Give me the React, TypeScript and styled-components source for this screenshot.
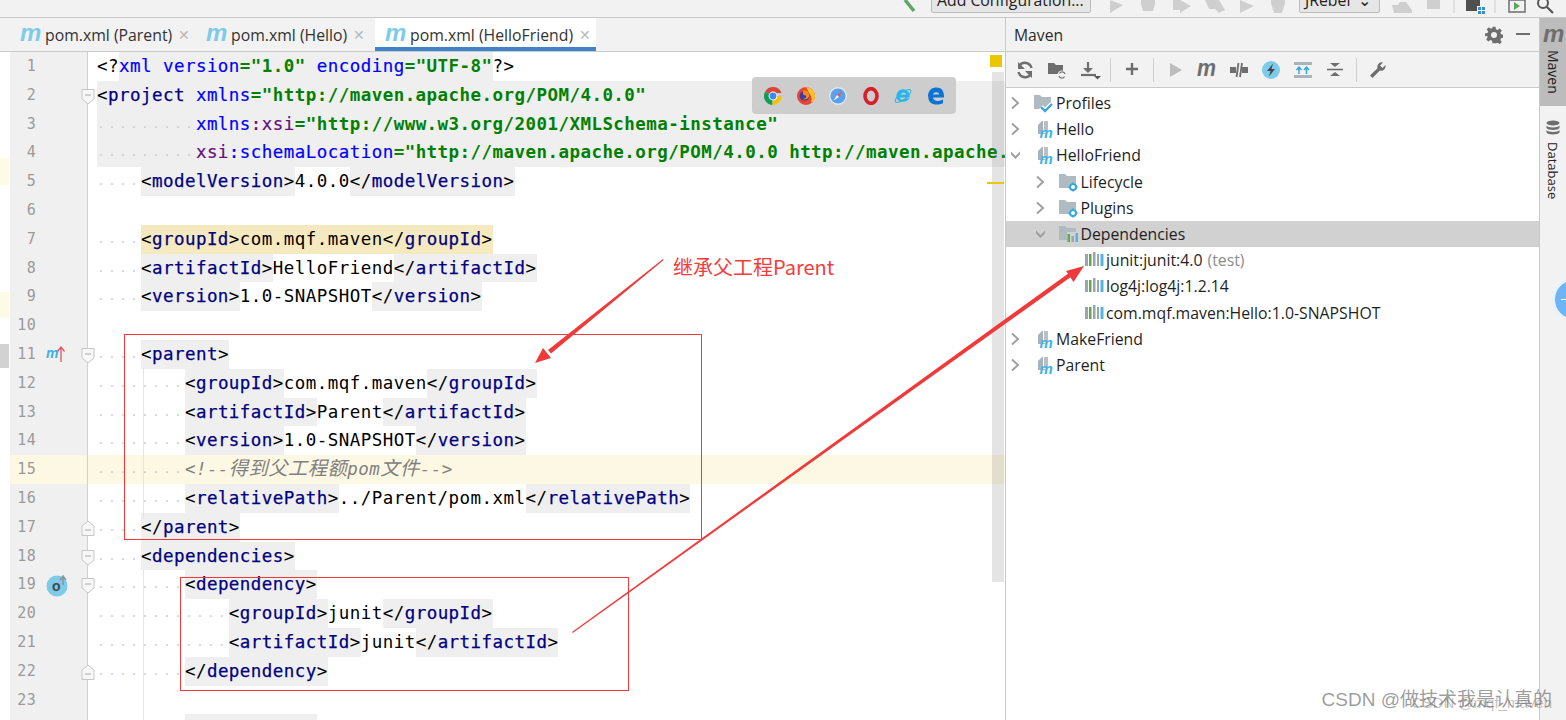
import { ReactNode } from "react"
import styled, { createGlobalStyle } from "styled-components"

const LINE_HEIGHT = 28.8

type Kind = "dot" | "punct" | "tag" | "attr" | "ns" | "value" | "text" | "comment" | "cjk"
type Token = [Kind, string, boolean?]

const dots = (n: number): Token => ["dot", ".".repeat(n)]
const open = (name: string): Token[] => [["punct", "<", true], ["tag", name, true], ["punct", ">", true]]
const close = (name: string): Token[] => [["punct", "</", true], ["tag", name, true], ["punct", ">", true]]

const CODE: Token[][] = [
  [["punct", "<?"], ["attr", "xml", true], ["attr", " version", true], ["value", '="1.0"', true], ["attr", " encoding", true], ["value", '="UTF-8"', true], ["punct", "?>"]],
  [["punct", "<", true], ["tag", "project", true], ["attr", " xmlns", true], ["value", '="http://maven.apache.org/POM/4.0.0"', true]],
  [dots(9), ["attr", "xmlns", true], ["ns", ":xsi", true], ["value", '="http://www.w3.org/2001/XMLSchema-instance"', true]],
  [dots(9), ["ns", "xsi", true], ["attr", ":schemaLocation", true], ["value", '="http://maven.apache.org/POM/4.0.0 http://maven.apache.', true]],
  [dots(4), ...open("modelVersion"), ["text", "4.0.0"], ...close("modelVersion")],
  [],
  [dots(4), ...open("groupId"), ["text", "com.mqf.maven", true], ...close("groupId")],
  [dots(4), ...open("artifactId"), ["text", "HelloFriend"], ...close("artifactId")],
  [dots(4), ...open("version"), ["text", "1.0-SNAPSHOT"], ...close("version")],
  [],
  [dots(4), ...open("parent")],
  [dots(8), ...open("groupId"), ["text", "com.mqf.maven"], ...close("groupId")],
  [dots(8), ...open("artifactId"), ["text", "Parent"], ...close("artifactId")],
  [dots(8), ...open("version"), ["text", "1.0-SNAPSHOT"], ...close("version")],
  [dots(8), ["comment", "<!--"], ["cjk", "得到父工程额"], ["comment", "pom"], ["cjk", "文件"], ["comment", "-->"]],
  [dots(8), ...open("relativePath"), ["text", "../Parent/pom.xml"], ...close("relativePath")],
  [dots(4), ...close("parent")],
  [dots(4), ...open("dependencies")],
  [dots(8), ...open("dependency")],
  [dots(12), ...open("groupId"), ["text", "junit"], ...close("groupId")],
  [dots(12), ...open("artifactId"), ["text", "junit"], ...close("artifactId")],
  [dots(8), ...close("dependency")],
  [],
  [dots(8), ["punct", " ".repeat(12), true]],
]

const GlobalStyle = createGlobalStyle`
  html, body { margin: 0; padding: 0; background: #fff; overflow: hidden; }
  body { font-family: "Open Sans", "Noto Sans", "Noto Sans CJK SC", sans-serif; }
`

const Page = styled.div`
  position: relative;
  width: 1566px;
  height: 720px;
  overflow: hidden;
  display: flex;
  flex-direction: column;
`
const TopBar = styled.div`
  height: 17px;
  flex: none;
  background: #f2f2f2;
  border-bottom: 1px solid #c9c9c9;
  display: flex;
  align-items: flex-end;
  padding-left: 900px;
  overflow: hidden;
`
const ToolButton = styled.div<{ $w: number }>`
  width: ${(p) => p.$w}px;
  height: 22px;
  margin-bottom: 4px;
  flex: none;
  box-sizing: border-box;
  background: #e6e6e6;
  border: 1px solid #bdbdbd;
  border-radius: 2px;
  font-size: 15.8px;
  line-height: 17px;
  padding-left: 5px;
  color: #222;
  white-space: nowrap;
  overflow: hidden;
  display: flex;
  justify-content: space-between;
  padding-right: 8px;
`
const TopIcon = styled.svg`
  flex: none;
`
const HammerIcon = styled(TopIcon)`
  margin-right: 15px;
`
const Body = styled.div`
  flex: 1;
  display: flex;
  min-height: 0;
`
const EditorColumn = styled.div`
  width: 1005px;
  flex: none;
  display: flex;
  flex-direction: column;
  border-right: 1px solid #c9c9c9;
`
const TabBar = styled.div`
  height: 33px;
  flex: none;
  display: flex;
  background: #f2f2f2;
  border-bottom: 1px solid #c9c9c9;
  padding-left: 10px;
`
const Tab = styled.div<{ $active?: boolean; $w: number }>`
  width: ${(p) => p.$w}px;
  flex: none;
  box-sizing: border-box;
  display: flex;
  align-items: center;
  gap: 5px;
  padding-left: 10px;
  font-size: 15.8px;
  color: #333;
  white-space: nowrap;
  background: ${(p) => (p.$active ? "#fff" : "transparent")};
  box-shadow: ${(p) => (p.$active ? "inset 0 -4px 0 #4083c9" : "none")};
`
const MavenM = styled.span`
  font-family: "Liberation Sans", sans-serif;
  font-style: italic;
  font-weight: 700;
  font-size: 24px;
  line-height: 20px;
  width: 20px;
  color: #7ecbe9;
  margin-top: -4px;
`
const CloseMark = styled.span`
  color: #b8b8b8;
  font-size: 14px;
  margin-left: 1px;
`
const EditorBody = styled.div`
  flex: 1;
  display: flex;
  min-height: 0;
  position: relative;
  overflow: hidden;
`
const LeftStrip = styled.div`
  width: 10px;
  flex: none;
  background: #fff;
  position: relative;
`
const StripMark = styled.div<{ $top: number; $h: number; $c: string }>`
  position: absolute;
  left: 0;
  width: 9px;
  top: ${(p) => p.$top}px;
  height: ${(p) => p.$h}px;
  background: ${(p) => p.$c};
`
const Gutter = styled.div`
  width: 77px;
  flex: none;
  background: #f0f0f0;
  border-right: 1px solid #d0d0d0;
  position: relative;
  z-index: 1;
`
const LineNo = styled.div<{ $current?: boolean }>`
  height: ${LINE_HEIGHT}px;
  line-height: ${LINE_HEIGHT}px;
  font-family: "DejaVu Sans Mono", monospace;
  font-size: 15px;
  letter-spacing: 0.3px;
  color: #9a9a9a;
  text-align: right;
  padding-right: 51px;
  background: ${(p) => (p.$current ? "#fdf8e3" : "transparent")};
`
const FoldMark = styled.svg<{ $line: number }>`
  position: absolute;
  left: 71px;
  top: ${(p) => p.$line * LINE_HEIGHT + 7}px;
`
const GutterIcon = styled.svg<{ $line: number }>`
  position: absolute;
  left: 36px;
  top: ${(p) => p.$line * LINE_HEIGHT + 3}px;
`
const Code = styled.div`
  flex: 1;
  position: relative;
  background: #fff;
  min-width: 0;
`
const CodeLine = styled.div<{ $bg?: string; $band?: boolean }>`
  height: ${LINE_HEIGHT}px;
  line-height: ${LINE_HEIGHT}px;
  box-sizing: border-box;
  padding-left: 9px;
  white-space: pre;
  font-family: "DejaVu Sans Mono", "Noto Sans CJK SC", monospace;
  font-size: 17.5px;
  letter-spacing: 0.45px;
  background: ${(p) => p.$bg ?? "transparent"};
  background-clip: ${(p) => (p.$band ? "content-box" : "border-box")};
`
const TOKEN_STYLE: Record<Kind, string> = {
  dot: "color: #cfcfcf; font-size: 13px; letter-spacing: 3.16px;",
  punct: "color: #000;",
  tag: "color: #000080; -webkit-text-stroke: 0.25px #000080;",
  attr: "color: #0000ff; -webkit-text-stroke: 0.2px #0000ff;",
  ns: "color: #660e7a; -webkit-text-stroke: 0.2px #660e7a;",
  value: "color: #008000; font-weight: 600;",
  text: "color: #000;",
  comment: "color: #808080; font-style: italic;",
  cjk: "color: #808080; font-style: italic; font-size: 19.3px;",
}
const Tok = styled.span<{ $kind: Kind; $hl?: string }>`
  display: inline-block;
  height: ${LINE_HEIGHT}px;
  vertical-align: top;
  background: ${(p) => p.$hl ?? "transparent"};
  ${(p) => TOKEN_STYLE[p.$kind]}
`
const IndentGuide = styled.div<{ $top: number; $h: number }>`
  position: absolute;
  left: 55px;
  top: ${(p) => p.$top}px;
  height: ${(p) => p.$h}px;
  width: 1px;
  background: #e4e4e4;
`
const BrowserBar = styled.div`
  position: absolute;
  left: 664px;
  top: 25px;
  width: 204px;
  height: 37px;
  background: #cdcdcd;
  border-radius: 4px;
  display: flex;
  align-items: center;
  padding-left: 12px;
  box-sizing: border-box;
  gap: 14.6px;
`
const ScrollThumb = styled.div`
  position: absolute;
  left: 904px;
  top: 20px;
  width: 12px;
  height: 510px;
  background: rgba(120, 120, 120, 0.2);
`
const ErrorStripe = styled.div<{ $x: number; $y: number; $w: number; $h: number }>`
  position: absolute;
  left: ${(p) => p.$x}px;
  top: ${(p) => p.$y}px;
  width: ${(p) => p.$w}px;
  height: ${(p) => p.$h}px;
  background: #ebc700;
`
const MavenPanel = styled.div`
  flex: 1;
  display: flex;
  flex-direction: column;
  background: #fff;
  min-width: 0;
`
const PanelHeader = styled.div`
  height: 33px;
  flex: none;
  background: #f2f2f2;
  border-bottom: 1px solid #c9c9c9;
  display: flex;
  align-items: center;
  gap: 12px;
  padding: 0 8px;
  font-size: 15.7px;
  color: #2b2b2b;
`
const PanelTitle = styled.span`
  flex: 1;
`
const PanelToolbar = styled.div`
  height: 35px;
  flex: none;
  background: #f2f2f2;
  border-bottom: 1px solid #c9c9c9;
  display: flex;
  align-items: center;
  padding-left: 3px;
`
const ToolCell = styled.div`
  width: 32px;
  flex: none;
  display: flex;
  justify-content: center;
  align-items: center;
`
const ToolSep = styled.div`
  width: 1px;
  height: 24px;
  margin: 0 5px;
  flex: none;
  background: #cfcfcf;
`
const Tree = styled.div`
  padding-top: 2px;
`
const TreeRow = styled.div<{ $depth: number; $selected?: boolean }>`
  height: 26.2px;
  display: flex;
  align-items: center;
  padding-left: ${(p) => 5 + p.$depth * 24.5}px;
  background: ${(p) => (p.$selected ? "#d1d1d1" : "transparent")};
  font-size: 15.8px;
  color: #1f1f1f;
  white-space: nowrap;
`
const Chevron = styled.svg`
  flex: none;
  margin-right: 14px;
`
const Spacer = styled.div`
  width: 9px;
  flex: none;
  margin-right: 16px;
`
const RowIcon = styled.svg`
  flex: none;
  margin-right: 2px;
`
const Muted = styled.span`
  color: #8c8c8c;
  margin-left: 5px;
`
const SideStrip = styled.div`
  width: 26px;
  flex: none;
  background: #f2f2f2;
  border-left: 1px solid #c9c9c9;
  display: flex;
  flex-direction: column;
`
const SideButton = styled.div<{ $active?: boolean; $h: number; $gap: number; $pad: number }>`
  height: ${(p) => p.$h}px;
  flex: none;
  background: ${(p) => (p.$active ? "#bcbcbc" : "transparent")};
  display: flex;
  flex-direction: column;
  align-items: center;
  gap: ${(p) => p.$gap}px;
  padding-top: ${(p) => p.$pad}px;
  box-sizing: border-box;
  color: #222;
`
const SideM = styled(MavenM)`
  color: #6e6e6e;
  margin-top: 0;
  text-align: center;
`
const SideLabel = styled.span<{ $size: number }>`
  writing-mode: vertical-rl;
  font-size: ${(p) => p.$size}px;
  line-height: 20px;
`
const FloatBall = styled.div`
  position: absolute;
  left: 1552px;
  top: 277px;
  width: 45px;
  height: 45px;
  border-radius: 50%;
  background: #6db5f5;
  border: 3px solid #e9f3fb;
  box-sizing: border-box;
`
const BallDash = styled.div`
  position: absolute;
  left: 6px;
  top: 19px;
  width: 7px;
  height: 1px;
  background: #fff;
`
const AnnotationBox = styled.div<{ $x: number; $y: number; $w: number; $h: number }>`
  position: absolute;
  left: ${(p) => p.$x}px;
  top: ${(p) => p.$y}px;
  width: ${(p) => p.$w}px;
  height: ${(p) => p.$h}px;
  box-sizing: border-box;
  border: 1px solid #f03a3a;
  pointer-events: none;
`
const AnnotationText = styled.div`
  position: absolute;
  left: 673px;
  top: 255px;
  font-size: 20px;
  line-height: 24px;
  color: #f53b3b;
  font-family: "Noto Sans CJK SC", sans-serif;
`
const Arrows = styled.svg`
  position: absolute;
  left: 0;
  top: 0;
  pointer-events: none;
`
const Watermark = styled.div`
  position: absolute;
  right: 14px;
  top: 688px;
  font-family: "Liberation Sans", "Noto Sans CJK SC", sans-serif;
  font-size: 19px;
  line-height: 24px;
  color: rgba(90, 90, 90, 0.6);
  white-space: nowrap;
`
const WatermarkUnder = styled(Watermark)`
  top: 691px;
  font-size: 15px;
  color: rgba(120, 120, 120, 0.45);
`

const tokenBg = (line: number, index: number, hl?: boolean) => {
  if (line === 0) return index > 0 && index < 6 ? "#efefef" : undefined
  if (line >= 1 && line <= 3) return undefined
  if (line === 6) return hl ? "#f5e9bf" : undefined
  return hl ? "#efefef" : undefined
}

const Chev = ({ down }: { down?: boolean }) => (
  <Chevron width="9" height="14" viewBox="0 0 9 14">
    {down ? (
      <path d="M-1 4l5.5 5.5L10 4" fill="none" stroke="#a0a0a0" strokeWidth="2" />
    ) : (
      <path d="M1 1.500l6 5.500-6 5.500" fill="none" stroke="#a0a0a0" strokeWidth="2" />
    )}
  </Chevron>
)

const ModuleIcon = () => (
  <RowIcon width="20" height="20" viewBox="0 0 20 20">
    <path d="M4 6l4-4h1v12h3v1H4z" fill="#a9b2b8" />
    <path d="M10 2h4v10h-4z" fill="#b9c0c5" />
    <text x="5.500" y="19" fontFamily="Liberation Sans" fontStyle="italic" fontWeight="700" fontSize="15" fill="#3fb2e6">m</text>
  </RowIcon>
)

const FolderBase = ({ children }: { children: ReactNode }) => (
  <RowIcon width="20" height="20" viewBox="0 0 20 20">
    <path d="M0 2h6l2 2h9v12H0z" fill="#b0bac1" />
    {children}
  </RowIcon>
)
const GearFolder = () => (
  <FolderBase>
    <circle cx="14" cy="15" r="4" fill="#fff" />
    <circle cx="14" cy="15" r="3" fill="none" stroke="#35a7dd" strokeWidth="2" />
    <path d="M14 10.500v2M14 17.500v2M9.500 15h2M16.500 15h2" stroke="#35a7dd" strokeWidth="1.600" />
  </FolderBase>
)
const ProfilesIcon = () => (
  <FolderBase>
    <path d="M7 14l4 4 7-7" fill="none" stroke="#fff" strokeWidth="5" />
    <path d="M7 14l4 4 7-7" fill="none" stroke="#35a7dd" strokeWidth="2.400" />
  </FolderBase>
)
const DepsFolder = () => (
  <FolderBase>
    <rect x="8" y="8" width="12" height="10" fill="#d1d1d1" />
    <rect x="8.500" y="10" width="2.500" height="8" fill="#62a84d" />
    <rect x="12.500" y="12" width="2.500" height="6" fill="#9aa5ad" />
    <rect x="16.500" y="9" width="2.500" height="9" fill="#53b4e2" />
  </FolderBase>
)
const LibIcon = () => (
  <RowIcon width="19" height="18" viewBox="0 0 19 18">
    <rect x="0" y="3" width="3" height="12" fill="#9aa5ad" />
    <rect x="4" y="3" width="2.500" height="12" fill="#62a84d" />
    <rect x="8" y="1" width="2.500" height="14" fill="#9aa5ad" />
    <rect x="12" y="3" width="2" height="12" fill="#9aa5ad" />
    <rect x="15.500" y="3" width="3" height="12" fill="#53b4e2" />
  </RowIcon>
)

const Fold = ({ line, up }: { line: number; up?: boolean }) => (
  <FoldMark $line={line} width="14" height="17" viewBox="0 0 14 17">
    {up ? (
      <path d="M1 15.500V6l6-5 6 5v9.500z" fill="#f7f7f7" stroke="#c6c6c6" />
    ) : (
      <path d="M1 1.500h12V11l-6 5-6-5z" fill="#f7f7f7" stroke="#c6c6c6" />
    )}
    <path d={up ? "M4 10h6" : "M4 7h6"} stroke="#a8a8a8" />
  </FoldMark>
)

const ChromeIcon = () => (
  <svg width="18" height="18" viewBox="0 0 18 18">
    <path d="M9 9L1.200 4.500A9 9 0 0 1 17.500 6H9z" fill="#db4437" />
    <path d="M9 9h8.500A9 9 0 0 1 8 18z" fill="#f4c20d" />
    <path d="M9 9l-1 9A9 9 0 0 1 1.200 4.500z" fill="#0f9d58" />
    <circle cx="9" cy="9" r="4.400" fill="#fff" />
    <circle cx="9" cy="9" r="3.400" fill="#4285f4" />
  </svg>
)
const FirefoxIcon = () => (
  <svg width="18" height="18" viewBox="0 0 18 18">
    <circle cx="9" cy="9" r="9" fill="#e8442f" />
    <path d="M9 0a9 9 0 0 1 9 9c0 3-1.500 5.500-4 7 1-3 1-7-2-10z" fill="#ffc22b" />
    <circle cx="7.500" cy="9" r="4.800" fill="#3a3f9e" />
    <path d="M6 3.500c3-1 7 2 6 6-1 3-5 4-7 2 3 1 5-1 4-3-2 0-3-1-3-2z" fill="#f58a1f" />
  </svg>
)
const SafariIcon = () => (
  <svg width="18" height="18" viewBox="0 0 18 18">
    <circle cx="9" cy="9" r="9" fill="#dfe8f4" />
    <circle cx="9" cy="9" r="7.600" fill="#5aa0ec" />
    <path d="M13.500 4.500L10 10 8 8z" fill="#f0554b" />
    <path d="M4.500 13.500L8 8l2 2z" fill="#f4f7fb" />
  </svg>
)
const OperaIcon = () => (
  <svg width="18" height="18" viewBox="0 0 18 18">
    <ellipse cx="9" cy="9" rx="6" ry="7.400" fill="none" stroke="#d81f2a" strokeWidth="3.600" />
  </svg>
)
const IeIcon = () => (
  <svg width="18" height="18" viewBox="0 0 19 19">
    <ellipse cx="9.500" cy="9.500" rx="10" ry="3.600" transform="rotate(-38 9.500 9.500)" fill="none" stroke="#29b5ea" strokeWidth="1.200" />
    <path fillRule="evenodd" d="M2.500 9.500a7 7 0 0 1 14 0v1.500H6c.4 2.800 5 3.400 7 1h3.300c-2.400 5.400-13.800 5-13.800-2.500zM6 8h7c-.3-3-6.600-3-7 0z" fill="#29b5ea" />
  </svg>
)
const EdgeIcon = () => (
  <svg width="18" height="18" viewBox="0 0 18 18">
    <path fillRule="evenodd" d="M1 8.500C1.500 3 5 .5 9.500 .5 14.500 .5 17.300 4 17 10.500H6c.3 3.800 6 4.400 10 2v3.700c-6 2.800-14 1.500-14.600-5C1.300 10 1.100 9 1 8.500zM6 7.500h6.200C12 4.600 6.600 4.200 6 7.500z" fill="#0c73d6" />
  </svg>
)

const PanelIcon = ({ children, w = 20 }: { children: ReactNode; w?: number }) => (
  <ToolCell>
    <svg width={w} height="20" viewBox={`0 0 ${w} 20`}>
      {children}
    </svg>
  </ToolCell>
)

const MAVEN_ICONS = (
  <>
    <PanelIcon>
      <path d="M16.500 8a6.800 6.800 0 0 0-12-2.500M3.500 12a6.800 6.800 0 0 0 12 2.500" fill="none" stroke="#6e6e6e" strokeWidth="2.400" />
      <path d="M3 2v7h7zM17 18v-7h-7z" fill="#6e6e6e" />
    </PanelIcon>
    <PanelIcon>
      <path d="M1 3h6l2 2h7v9H1z" fill="#6e6e6e" />
      <circle cx="15" cy="15" r="4.500" fill="#f2f2f2" />
      <path d="M18 14a3 3 0 0 0-5.500-.5M12 16a3 3 0 0 0 5.500 .5" fill="none" stroke="#777" strokeWidth="1.300" />
    </PanelIcon>
    <PanelIcon w={24}>
      <path d="M11 2v9" stroke="#6e6e6e" strokeWidth="2.200" />
      <path d="M6 8h10l-5 5z" fill="#6e6e6e" />
      <path d="M4 15h15" stroke="#6e6e6e" strokeWidth="2.200" />
      <path d="M17 16h7l-3.500 3.500z" fill="#555" />
    </PanelIcon>
    <ToolSep />
    <PanelIcon w={18}>
      <path d="M9 3v12M3 9h12" stroke="#6e6e6e" strokeWidth="2.400" />
    </PanelIcon>
    <ToolSep />
    <PanelIcon w={19}>
      <path d="M4 3l12 7-12 7z" fill="#bdbdbd" />
    </PanelIcon>
    <PanelIcon>
      <text x="0" y="16" fontFamily="Liberation Sans" fontStyle="italic" fontWeight="700" fontSize="23" fill="#6e6e6e" textLength="19" lengthAdjust="spacingAndGlyphs">m</text>
    </PanelIcon>
    <PanelIcon>
      <path d="M1 7h6v6H1zM13 7h6v6h-6z" fill="#6e6e6e" />
      <path d="M7.500 17l2-14M11 17l2-14" stroke="#6e6e6e" strokeWidth="1.800" />
    </PanelIcon>
    <PanelIcon>
      <circle cx="10" cy="10" r="9" fill="#7ecbe9" />
      <path d="M12 3.500L6 11h3.500L8 16.500 14 9h-3.500z" fill="#3f4a50" />
    </PanelIcon>
    <PanelIcon>
      <path d="M1 2h18v3H1zM1 15h18v3H1z" fill="#a9b3ba" />
      <path d="M6 14V8M3.500 10L6 7l2.500 3M13.500 14V8M11 10l2.500-3 2.500 3" fill="none" stroke="#2ea3dc" strokeWidth="1.400" />
    </PanelIcon>
    <PanelIcon>
      <path d="M2 9.500h16" stroke="#6e6e6e" strokeWidth="1.600" />
      <path d="M5 3h10l-5 4zM5 16h10l-5-4z" fill="#6e6e6e" />
    </PanelIcon>
    <ToolSep />
    <PanelIcon>
      <path d="M15 2.500a4.500 4.500 0 0 0-5.500 5.700L2 15.500 4.500 18l7.300-7.500A4.500 4.500 0 0 0 17.500 5l-3 3-2.500-2.500z" fill="#6e6e6e" />
    </PanelIcon>
  </>
)

export default function App() {
  return (
    <Page>
      <GlobalStyle />
      <TopBar>
        <HammerIcon width="16" height="17" viewBox="0 0 16 17">
          <path d="M5 0l9 11" fill="none" stroke="#5fa56c" strokeWidth="3.500" />
        </HammerIcon>
        <ToolButton $w={160}>Add Configuration...</ToolButton>
        <TopIcon width="208" height="17" viewBox="0 0 208 17">
          <g fill="#cfcfcf">
            <path d="M19 0l13 5-13 8z" />
            <path d="M50 0h14v4l-2 7h-10l-2-7z" />
            <path d="M82 0h7l11 6-11 7v-3h-7z" />
            <path d="M114 0h14l6 10-6 3-4-4h-6z" />
            <path d="M149 0l14 6-14 7z" />
            <path d="M180 0h14v3l-3 10h-8l-3-10z" />
          </g>
        </TopIcon>
        <ToolButton $w={81}>JRebel<span>⌄</span></ToolButton>
        <TopIcon width="186" height="17" viewBox="0 0 186 17">
          <path d="M12 5h6l2-3h6l6 8v3H14z" fill="#cfcfcf" />
          <path d="M47 0h13v9H47z" fill="#cfcfcf" />
          <path d="M74 0v13" stroke="#cfcfcf" />
          <path d="M86 0h14v11H86z" fill="#4f4f4f" />
          <path d="M97 6h8v8h-8z" fill="#f2f2f2" />
          <path d="M98 7h3v3h-3zM102 7h3v3h-3zM98 11h3v3h-3zM102 11h3v3h-3z" fill="#3b8fd1" />
          <path d="M115 0v13" stroke="#cfcfcf" />
          <path d="M129 0h16v12h-16z" fill="none" stroke="#6e6e6e" strokeWidth="1.500" />
          <path d="M134 2l6 4-6 4z" fill="#58a55c" />
          <circle cx="163" cy="3" r="5" fill="none" stroke="#555" strokeWidth="2" />
          <path d="M167 7l6 6" stroke="#555" strokeWidth="2.200" />
        </TopIcon>
      </TopBar>
      <Body>
        <EditorColumn>
          <TabBar>
            <Tab $w={186}>
              <MavenM>m</MavenM>pom.xml (Parent)<CloseMark>✕</CloseMark>
            </Tab>
            <Tab $w={179}>
              <MavenM>m</MavenM>pom.xml (Hello)<CloseMark>✕</CloseMark>
            </Tab>
            <Tab $active $w={221}>
              <MavenM>m</MavenM>pom.xml (HelloFriend)<CloseMark>✕</CloseMark>
            </Tab>
          </TabBar>
          <EditorBody>
            <LeftStrip>
              <StripMark $top={106} $h={27} $c="#fdfbe6" />
              <StripMark $top={240} $h={26} $c="#fdfbe6" />
              <StripMark $top={292} $h={24} $c="#d2d2d2" />
            </LeftStrip>
            <Gutter>
              {CODE.map((_, i) => (
                <LineNo key={i} $current={i === 14}>{i < 23 ? i + 1 : ""}</LineNo>
              ))}
              <GutterIcon $line={10} width="20" height="22" viewBox="0 0 20 22">
                <text x="0" y="15" fontFamily="Liberation Sans" fontStyle="italic" fontWeight="700" fontSize="14" fill="#3fb2e6">m</text>
                <path d="M15 19V5M11.500 8.500L15 4l3.500 4.500" fill="none" stroke="#e0555f" strokeWidth="1.300" />
              </GutterIcon>
              <GutterIcon $line={18} width="23" height="24" viewBox="0 0 23 24">
                <circle cx="11" cy="13" r="10.500" fill="#7ecbe9" />
                <text x="6" y="18" fontFamily="Liberation Sans" fontWeight="700" fontSize="14" fill="#3f4a50">o</text>
                <path d="M17 12V4M14 7l3-4 3 4" fill="none" stroke="#8d959a" strokeWidth="1.500" />
              </GutterIcon>
              {[1, 10, 17, 18].map((l) => (
                <Fold key={l} line={l} />
              ))}
              {[16, 21].map((l) => (
                <Fold key={l} line={l} up />
              ))}
            </Gutter>
            <Code>
              {CODE.map((tokens, i) => (
                <CodeLine key={i} $band={i >= 1 && i <= 3} $bg={i === 14 ? "#fdf8e3" : i >= 1 && i <= 3 ? "#efefef" : undefined}>
                  {tokens.map(([kind, text, hl], j) => (
                    <Tok key={j} $kind={kind} $hl={tokenBg(i, j, hl)}>
                      {text}
                    </Tok>
                  ))}
                </CodeLine>
              ))}
              <IndentGuide $top={316} $h={150} />
              <IndentGuide $top={518} $h={160} />
              <BrowserBar>
                <ChromeIcon />
                <FirefoxIcon />
                <SafariIcon />
                <OperaIcon />
                <IeIcon />
                <EdgeIcon />
              </BrowserBar>
              <ScrollThumb />
              <ErrorStripe $x={902} $y={3} $w={12} $h={12} />
              <ErrorStripe $x={899} $y={130} $w={17} $h={2} />
            </Code>
          </EditorBody>
        </EditorColumn>
        <MavenPanel>
          <PanelHeader>
            <PanelTitle>Maven</PanelTitle>
            <svg width="18" height="18" viewBox="0 0 24 24">
              <path d="M10 1h4l.6 3.300 2.200 .9 2.800-1.900 2.800 2.800-1.900 2.800 .9 2.200 3.300 .6v4l-3.300 .6-.9 2.200 1.900 2.800-2.800 2.800-2.800-1.900-2.200 .9L14 23h-4l-.6-3.300-2.200-.9-2.800 1.900-2.800-2.800 1.900-2.800-.9-2.200L0 14v-4l3.300-.6 .9-2.200-1.900-2.800 2.800-2.800 2.800 1.900 2.200-.9z" fill="#6e6e6e" />
              <circle cx="12" cy="12" r="4" fill="#f2f2f2" />
            </svg>
            <svg width="16" height="18" viewBox="0 0 16 18">
              <path d="M1 8h14" stroke="#6e6e6e" strokeWidth="2" />
            </svg>
          </PanelHeader>
          <PanelToolbar>{MAVEN_ICONS}</PanelToolbar>
          <Tree>
            <TreeRow $depth={0}><Chev /><ProfilesIcon />Profiles</TreeRow>
            <TreeRow $depth={0}><Chev /><ModuleIcon />Hello</TreeRow>
            <TreeRow $depth={0}><Chev down /><ModuleIcon />HelloFriend</TreeRow>
            <TreeRow $depth={1}><Chev /><GearFolder />Lifecycle</TreeRow>
            <TreeRow $depth={1}><Chev /><GearFolder />Plugins</TreeRow>
            <TreeRow $depth={1} $selected><Chev down /><DepsFolder />Dependencies</TreeRow>
            <TreeRow $depth={2}><Spacer /><LibIcon />junit:junit:4.0<Muted>(test)</Muted></TreeRow>
            <TreeRow $depth={2}><Spacer /><LibIcon />log4j:log4j:1.2.14</TreeRow>
            <TreeRow $depth={2}><Spacer /><LibIcon />com.mqf.maven:Hello:1.0-SNAPSHOT</TreeRow>
            <TreeRow $depth={0}><Chev /><ModuleIcon />MakeFriend</TreeRow>
            <TreeRow $depth={0}><Chev /><ModuleIcon />Parent</TreeRow>
          </Tree>
        </MavenPanel>
        <SideStrip>
          <SideButton $active $h={88} $gap={6} $pad={6}>
            <SideM>m</SideM>
            <SideLabel $size={14}>Maven</SideLabel>
          </SideButton>
          <SideButton $h={100} $gap={6} $pad={14}>
            <svg width="16" height="16" viewBox="0 0 16 16">
              <ellipse cx="8" cy="3" rx="6.500" ry="2.500" fill="#6e6e6e" />
              <path d="M1.500 5.500c1 2.500 12 2.500 13 0V8c-1 2.500-12 2.500-13 0zM1.500 10c1 2.500 12 2.500 13 0v2.500c-1 2.500-12 2.500-13 0z" fill="#6e6e6e" />
            </svg>
            <SideLabel $size={13}>Database</SideLabel>
          </SideButton>
        </SideStrip>
      </Body>
      <FloatBall><BallDash /></FloatBall>
      <AnnotationBox $x={124} $y={334} $w={578} $h={206} />
      <AnnotationBox $x={180} $y={577} $w={449} $h={114} />
      <AnnotationText>继承父工程Parent</AnnotationText>
      <Arrows width="1566" height="720" viewBox="0 0 1566 720">
        <path d="M663 259l.7 .9L551 353.500 548 350z" fill="#f03a3a" />
        <path d="M535 363l8-15 8 10z" fill="#f03a3a" />
        <path d="M572 632l.7 1L1071.500 276.500 1069 273z" fill="#f03a3a" />
        <path d="M1084 266l-18 5 7.500 11z" fill="#f03a3a" />
      </Arrows>
      <WatermarkUnder>CSDN @mqf_maven</WatermarkUnder>
      <Watermark>CSDN @做技术我是认真的</Watermark>
    </Page>
  )
}
